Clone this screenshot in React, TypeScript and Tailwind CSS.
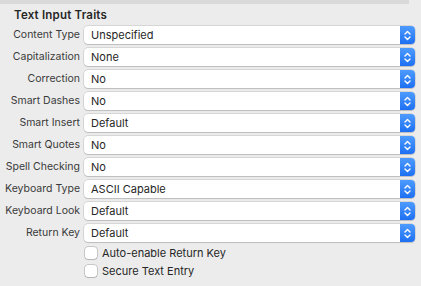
const rows: [string, string][] = [
  ["Content Type", "Unspecified"],
  ["Capitalization", "None"],
  ["Correction", "No"],
  ["Smart Dashes", "No"],
  ["Smart Insert", "Default"],
  ["Smart Quotes", "No"],
  ["Spell Checking", "No"],
  ["Keyboard Type", "ASCII Capable"],
  ["Keyboard Look", "Default"],
  ["Return Key", "Default"],
];

function Stepper() {
  return (
    <div className="w-[15px] self-stretch rounded-r-[4px] bg-gradient-to-b from-[#4d9bff] to-[#1d6ff2] flex items-center justify-center">
      <svg width="7" height="11" viewBox="0 0 7 11" fill="none" stroke="white" strokeWidth="1.4" strokeLinecap="round" strokeLinejoin="round">
        <path d="M1 4 L3.5 1.5 L6 4" />
        <path d="M1 7 L3.5 9.5 L6 7" />
      </svg>
    </div>
  );
}

function Popup({ value }: { value: string }) {
  return (
    <div className="flex-1 h-[18px] flex bg-white rounded-[4px] shadow-[0_0_0_0.5px_rgba(0,0,0,0.18),0_1px_1px_rgba(0,0,0,0.12)]">
      <span className="flex-1 pl-[7px] text-[11px] leading-[18px] text-[#262626]">{value}</span>
      <Stepper />
    </div>
  );
}

function Check({ label }: { label: string }) {
  return (
    <div className="flex items-center h-[18px] gap-[5px]">
      <span className="w-[12px] h-[12px] rounded-[3px] bg-white shadow-[0_0_0_0.5px_rgba(0,0,0,0.3),0_1px_1px_rgba(0,0,0,0.1)]" />
      <span className="text-[11px] text-[#262626]">{label}</span>
    </div>
  );
}

export default function App() {
  return (
    <div className="w-[421px] h-[286px] bg-[#ececec] font-['Inter','Liberation_Sans',sans-serif] overflow-hidden">
      <div className="flex h-[4px]">
        <div className="w-[409px] bg-[#d9d9d9]" />
      </div>
      <div className="pl-[14px] pt-[4px] h-[22px] text-[11.5px] font-semibold text-[#262626] leading-[15px] tracking-[0.2px]">
        Text Input Traits
      </div>
      <div className="flex flex-col gap-[4px] pr-[6px]">
        {rows.map(([label, value]) => (
          <div key={label} className="flex items-center">
            <span className="w-[80px] text-right text-[10.5px] text-[#3a3a3a] whitespace-nowrap">{label}</span>
            <div className="w-[4px]" />
            <Popup value={value} />
          </div>
        ))}
      </div>
      <div className="pl-[85px] pt-[2px] flex flex-col">
        <Check label="Auto-enable Return Key" />
        <Check label="Secure Text Entry" />
      </div>
    </div>
  );
}
